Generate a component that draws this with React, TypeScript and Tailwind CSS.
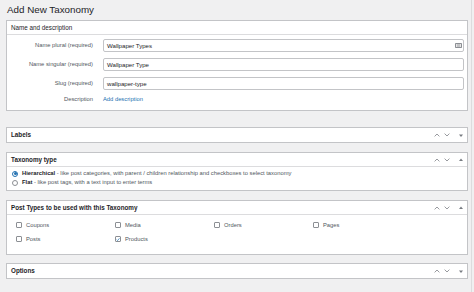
import React from "react";

const font = { fontFamily: '"Liberation Sans", Arial, sans-serif' };

function Up() {
  return (
    <svg width="6" height="4" viewBox="0 0 6 4">
      <path d="M0.6 3.4 L3 1 L5.4 3.4" fill="none" stroke="#8c8f94" strokeWidth="0.9" />
    </svg>
  );
}
function Down() {
  return (
    <svg width="6" height="4" viewBox="0 0 6 4">
      <path d="M0.6 0.6 L3 3 L5.4 0.6" fill="none" stroke="#8c8f94" strokeWidth="0.9" />
    </svg>
  );
}
function Tri({ up }: { up: boolean }) {
  return (
    <svg width="4" height="3" viewBox="0 0 4 3">
      {up ? <path d="M0 3 L2 0.5 L4 3 Z" fill="#787c82" /> : <path d="M0 0.5 L4 0.5 L2 3 Z" fill="#787c82" />}
    </svg>
  );
}

function Header({ title, bold = true, controls = true, open = false, border = true }: { title: string; bold?: boolean; controls?: boolean; open?: boolean; border?: boolean }) {
  return (
    <div className={`flex h-[14px] items-center justify-between pl-[4px] pr-[1px] ${border ? "border-b border-[#dcdcde]" : ""}`}>
      <span className={`text-[6.3px] text-[#1d2327] ${bold ? "font-bold" : "font-normal"}`}>{title}</span>
      {controls && (
        <div className="flex items-center">
          <span className="flex w-[10px] justify-center"><Up /></span>
          <span className="flex w-[10px] justify-center"><Down /></span>
          <span className="ml-[4px] flex w-[10px] justify-center"><Tri up={open} /></span>
        </div>
      )}
    </div>
  );
}

function Field({ label, value, icon = false }: { label: string; value: string; icon?: boolean }) {
  return (
    <div className="flex h-[13px] items-center">
      <div className="w-[86px] text-right text-[5.8px] text-[#50575e]">{label}</div>
      <div className="ml-[10px] flex h-[13px] flex-1 items-center justify-between rounded-[2px] border border-[#c3c4c7] bg-white pl-[3px] pr-[1px]">
        <span className="text-[6.1px] text-[#1d2327]">{value}</span>
        {icon && (
          <svg width="7" height="5" viewBox="0 0 7 5">
            <rect x="0" y="0" width="7" height="5" rx="0.8" fill="#8c8f94" />
            <rect x="1" y="1" width="1.6" height="3" fill="#e6e6e6" />
            <rect x="3.2" y="1" width="0.6" height="3" fill="#e6e6e6" />
            <rect x="4.4" y="1" width="1.6" height="3" fill="#e6e6e6" />
          </svg>
        )}
      </div>
    </div>
  );
}

function Check({ label, checked = false }: { label: string; checked?: boolean }) {
  return (
    <div className="flex h-[10px] items-center">
      <span className="flex h-[6px] w-[6px] items-center justify-center rounded-[1px] border border-[#8c8f94] bg-white">
        {checked && (
          <svg width="5" height="5" viewBox="0 0 5 5">
            <path d="M0.8 2.6 L2 3.8 L4.3 1" fill="none" stroke="#2271b1" strokeWidth="0.9" />
          </svg>
        )}
      </span>
      <span className="ml-[4px] text-[5.8px] text-[#50575e]">{label}</span>
    </div>
  );
}

function Radio({ checked = false, title, desc }: { checked?: boolean; title: string; desc: string }) {
  return (
    <div className="flex h-[9px] items-center">
      <span className={`flex h-[6px] w-[6px] items-center justify-center rounded-full border bg-white ${checked ? "border-[#2271b1]" : "border-[#8c8f94]"}`}>
        {checked && <span className="h-[3px] w-[3px] rounded-full bg-[#2271b1]" />}
      </span>
      <span className="ml-[4px] text-[5.8px] text-[#50575e]">
        <span className="font-bold text-[#1d2327]">{title}</span>
        {desc}
      </span>
    </div>
  );
}

export default function App() {
  return (
    <div className="flex min-h-[292px] w-[474px] overflow-hidden bg-[#f0f0f1]" style={font}>
      <div className="w-[471px] pl-[6px]">
        <div className="flex h-[20px] items-center pl-[1px] text-[9.8px] leading-[20px] text-[#1d2327]">Add New Taxonomy</div>

        <div className="w-[462px] border border-[#c3c4c7] bg-white">
          <Header title="Name and description" bold={false} controls={false} />
          <div className="flex flex-col pb-[5px] pr-[3px] pt-[4px]">
            <Field label="Name plural (required)" value="Wallpaper Types" icon />
            <div className="mt-[6px]"><Field label="Name singular (required)" value="Wallpaper Type" /></div>
            <div className="mt-[6px]"><Field label="Slug (required)" value="wallpaper-type" /></div>
            <div className="mt-[4px] flex h-[11px] items-center">
              <div className="w-[86px] text-right text-[5.8px] text-[#50575e]">Description</div>
              <div className="ml-[10px] text-[5.8px] text-[#2271b1]">Add description</div>
            </div>
          </div>
        </div>

        <div className="mt-[16px] w-[462px] border border-[#c3c4c7] bg-white">
          <Header title="Labels" border={false} />
        </div>

        <div className="mt-[9px] w-[462px] border border-[#c3c4c7] bg-white">
          <Header title="Taxonomy type" open />
          <div className="pb-[3px] pl-[5px] pt-[2px]">
            <Radio checked title="Hierarchical" desc=" - like post categories, with parent / children relationship and checkboxes to select taxonomy" />
            <Radio title="Flat" desc=" - like post tags, with a text input to enter terms" />
          </div>
        </div>

        <div className="mt-[9px] w-[462px] border border-[#c3c4c7] bg-white">
          <Header title="Post Types to be used with this Taxonomy" open />
          <div className="grid grid-cols-[99px_99px_99px_99px] gap-y-[4px] pb-[10px] pl-[9px] pt-[5px]">
            <Check label="Coupons" />
            <Check label="Media" />
            <Check label="Orders" />
            <Check label="Pages" />
            <Check label="Posts" />
            <Check label="Products" checked />
          </div>
        </div>

        <div className="mt-[8px] w-[462px] border border-[#c3c4c7] bg-white">
          <Header title="Options" border={false} />
        </div>
      </div>
      <div className="flex-1 border-l border-[#dcdcde] bg-[#f0f0f1]" />
    </div>
  );
}
